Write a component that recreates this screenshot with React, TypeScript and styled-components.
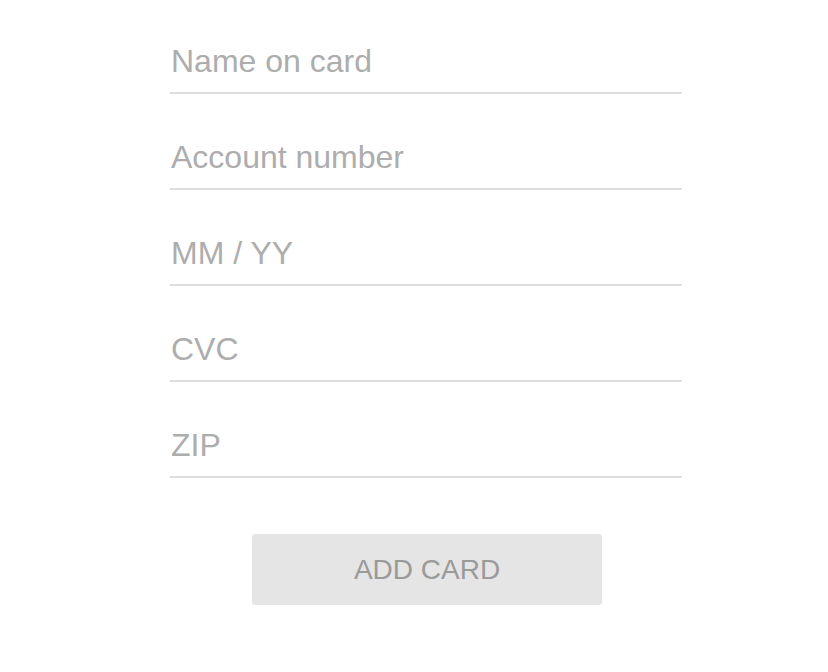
import React from "react";
import styled, { createGlobalStyle } from "styled-components";

const Global = createGlobalStyle`
  html, body { margin: 0; padding: 0; background: #fff; }
  body { font-family: "Liberation Sans", Arial, Helvetica, sans-serif; }
`;

const Page = styled.div`
  display: flex;
  justify-content: center;
  padding: 43px 0 0 24px;
`;

const Form = styled.form`
  width: 512px;
  display: flex;
  flex-direction: column;
  gap: 45px;
`;

const Input = styled.input`
  display: block;
  box-sizing: border-box;
  width: 100%;
  height: 51px;
  margin: 0;
  padding: 0 0 12px 1px;
  border: none;
  border-bottom: 2px solid #dedede;
  outline: none;
  background: transparent;
  font-family: "Liberation Sans", Arial, Helvetica, sans-serif;
  font-size: 32px;
  color: #333;
  &::placeholder { color: #adadad; opacity: 1; }
`;

const Actions = styled.div`
  display: flex;
  justify-content: center;
  margin-top: 11px;
  padding-left: 2px;
`;

const Button = styled.button`
  width: 350px;
  height: 71px;
  border: none;
  border-radius: 3px;
  background: #e5e5e5;
  color: #9a9a9a;
  font-family: "Liberation Sans", Arial, Helvetica, sans-serif;
  font-size: 28px;
  padding: 0;
  cursor: pointer;
`;

const fields = ["Name on card", "Account number", "MM / YY", "CVC", "ZIP"];

export default function App() {
  return (
    <>
      <Global />
      <Page>
        <Form onSubmit={(e) => e.preventDefault()}>
          {fields.map((f) => (
            <Input key={f} placeholder={f} />
          ))}
          <Actions>
            <Button type="submit">ADD CARD</Button>
          </Actions>
        </Form>
      </Page>
    </>
  );
}
